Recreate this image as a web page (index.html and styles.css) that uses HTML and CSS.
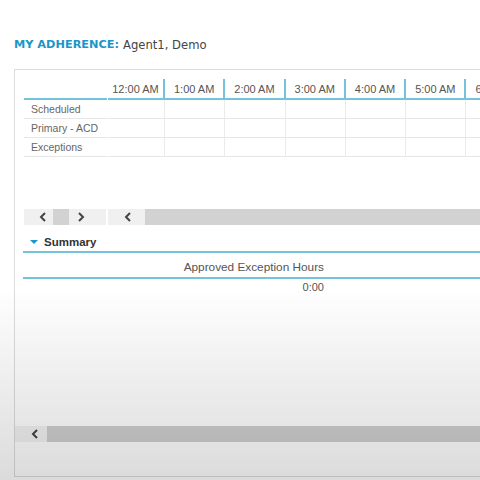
FILE: index.html
```html
<!DOCTYPE html>
<html>
<head>
<meta charset="utf-8">
<link rel="stylesheet" href="styles.css">
</head>
<body>
<div class="page">
  <h1 class="title"><span class="title-key">MY ADHERENCE:</span><span class="title-val">Agent1, Demo</span></h1>
  <div class="panel">
    <div class="grid">
      <div class="row head">
        <div class="label"></div>
        <div class="hour">12:00 AM</div>
        <div class="hour">1:00 AM</div>
        <div class="hour">2:00 AM</div>
        <div class="hour">3:00 AM</div>
        <div class="hour">4:00 AM</div>
        <div class="hour">5:00 AM</div>
        <div class="hour">6:00 AM</div>
      </div>
      <div class="row">
        <div class="label">Scheduled</div>
        <div class="cell"></div><div class="cell"></div><div class="cell"></div><div class="cell"></div><div class="cell"></div><div class="cell"></div><div class="cell"></div>
      </div>
      <div class="row">
        <div class="label">Primary - ACD</div>
        <div class="cell"></div><div class="cell"></div><div class="cell"></div><div class="cell"></div><div class="cell"></div><div class="cell"></div><div class="cell"></div>
      </div>
      <div class="row">
        <div class="label">Exceptions</div>
        <div class="cell"></div><div class="cell"></div><div class="cell"></div><div class="cell"></div><div class="cell"></div><div class="cell"></div><div class="cell"></div>
      </div>
    </div>

    <div class="scrolls">
      <div class="track small">
        <svg class="chev" width="8" height="10" viewBox="0 0 8 10"><polyline points="6,1 2,5 6,9" fill="none" stroke="#444" stroke-width="2"/></svg>
        <div class="thumb small-thumb"></div>
        <svg class="chev" width="8" height="10" viewBox="0 0 8 10"><polyline points="2,1 6,5 2,9" fill="none" stroke="#444" stroke-width="2"/></svg>
      </div>
      <div class="track big">
        <svg class="chev" width="8" height="10" viewBox="0 0 8 10"><polyline points="6,1 2,5 6,9" fill="none" stroke="#444" stroke-width="2"/></svg>
        <div class="thumb grow"></div>
      </div>
    </div>

    <div class="summary">
      <div class="summary-head">
        <span class="tri"></span>
        <span class="summary-title">Summary</span>
      </div>
      <div class="sum-row sum-head"><div class="sum-col">Approved Exception Hours</div></div>
      <div class="sum-row sum-val"><div class="sum-col">0:00</div></div>
    </div>

    <div class="spacer"></div>

    <div class="track bottom">
      <svg class="chev" width="8" height="10" viewBox="0 0 8 10"><polyline points="6,1 2,5 6,9" fill="none" stroke="#444" stroke-width="2"/></svg>
      <div class="thumb grow"></div>
    </div>
  </div>
</div>
</body>
</html>
```

FILE: styles.css
```css
html, body {
  margin: 0;
  padding: 0;
  background: #ffffff;
  overflow: hidden;
  width: 480px;
  height: 480px;
}
body::after {
  content: "";
  position: fixed;
  left: 0;
  top: 0;
  width: 480px;
  height: 480px;
  pointer-events: none;
  background: linear-gradient(to bottom, rgba(0,0,0,0) 60%, rgba(0,0,0,0.14) 100%);
}
.page {
  font-family: "Liberation Sans", Arial, sans-serif;
  color: #555;
  padding: 37px 0 0 14px;
}
.title {
  margin: 0;
  height: 16px;
  line-height: 16px;
  font-weight: normal;
  display: flex;
  gap: 4px;
  white-space: nowrap;
}
.title-key {
  font-family: "DejaVu Sans", sans-serif;
  font-weight: bold;
  font-size: 11.3px;
  color: #1a96c8;
}
.title-val {
  font-family: "DejaVu Sans", sans-serif;
  font-size: 11.6px;
  color: #444;
}
.panel {
  margin-top: 16px;
  width: 520px;
  height: 406px;
  border: 1px solid #dcdcdc;
  display: flex;
  flex-direction: column;
}
.grid {
  padding: 9px 0 0 9px;
}
.row {
  display: flex;
  height: 19px;
}
.row.head {
  height: 21px;
}
.label {
  width: 83px;
  flex: none;
  margin-right: 1px;
  box-sizing: border-box;
  padding-left: 7px;
  font-size: 10.5px;
  line-height: 18px;
  color: #666;
  border-bottom: 1px solid #e6e6e6;
  white-space: nowrap;
}
.head .label {
  border-bottom: 2px solid #75c2db;
}
.hour {
  width: 60.3px;
  flex: none;
  box-sizing: border-box;
  text-align: center;
  font-size: 11px;
  color: #555;
  line-height: 20px;
  border-right: 2px solid #75c2db;
  border-bottom: 2px solid #75c2db;
  white-space: nowrap;
}
.head .label + .hour {
  width: 57px;
}
.cell {
  width: 60.3px;
  flex: none;
  box-sizing: border-box;
  border-right: 1px solid #ebebeb;
  border-bottom: 1px solid #e6e6e6;
}
.label + .cell {
  width: 57px;
}
.scrolls {
  margin-top: 52px;
  padding-left: 9px;
  display: flex;
  gap: 2px;
  height: 16px;
}
.track {
  background: #f0f0f0;
  display: flex;
  align-items: center;
  height: 16px;
}
.track.small {
  width: 82px;
  padding-left: 15px;
  box-sizing: border-box;
}
.track.small .chev:last-child {
  margin-left: 8px;
}
.small-thumb {
  width: 16px;
  margin-left: 6px;
}
.thumb {
  height: 16px;
  background: #d2d2d2;
}
.track.big {
  flex: 1;
  padding-left: 16px;
}
.track.big .thumb {
  margin-left: 13px;
}
.grow {
  flex: 1;
}
.summary {
  margin-top: 8px;
  padding-left: 8px;
}
.summary-head {
  height: 18px;
  display: flex;
  align-items: center;
  border-bottom: 2px solid #75c2db;
  padding-left: 7px;
}
.tri {
  width: 0;
  height: 0;
  border-left: 4px solid transparent;
  border-right: 4px solid transparent;
  border-top: 4px solid #1a96c8;
  margin-right: 6px;
}
.summary-title {
  font-family: "Liberation Sans", Arial, sans-serif;
  font-weight: bold;
  font-size: 11.5px;
  color: #333;
}
.sum-row {
  height: 24px;
  box-sizing: border-box;
}
.sum-head {
  border-bottom: 2px solid #75c2db;
  height: 26px;
  padding-top: 5px;
}
.sum-col {
  width: 301px;
  text-align: right;
  font-size: 11.8px;
  line-height: 18px;
  color: #555;
  white-space: nowrap;
}
.sum-val .sum-col {
  font-size: 11px;
  line-height: 16px;
}
.spacer {
  flex: 1;
}
.track.bottom {
  background: #f2f2f2;
  margin-bottom: 34px;
  padding-left: 16px;
}
.track.bottom .thumb {
  background: #cfcfcf;
  margin-left: 8px;
}
```
